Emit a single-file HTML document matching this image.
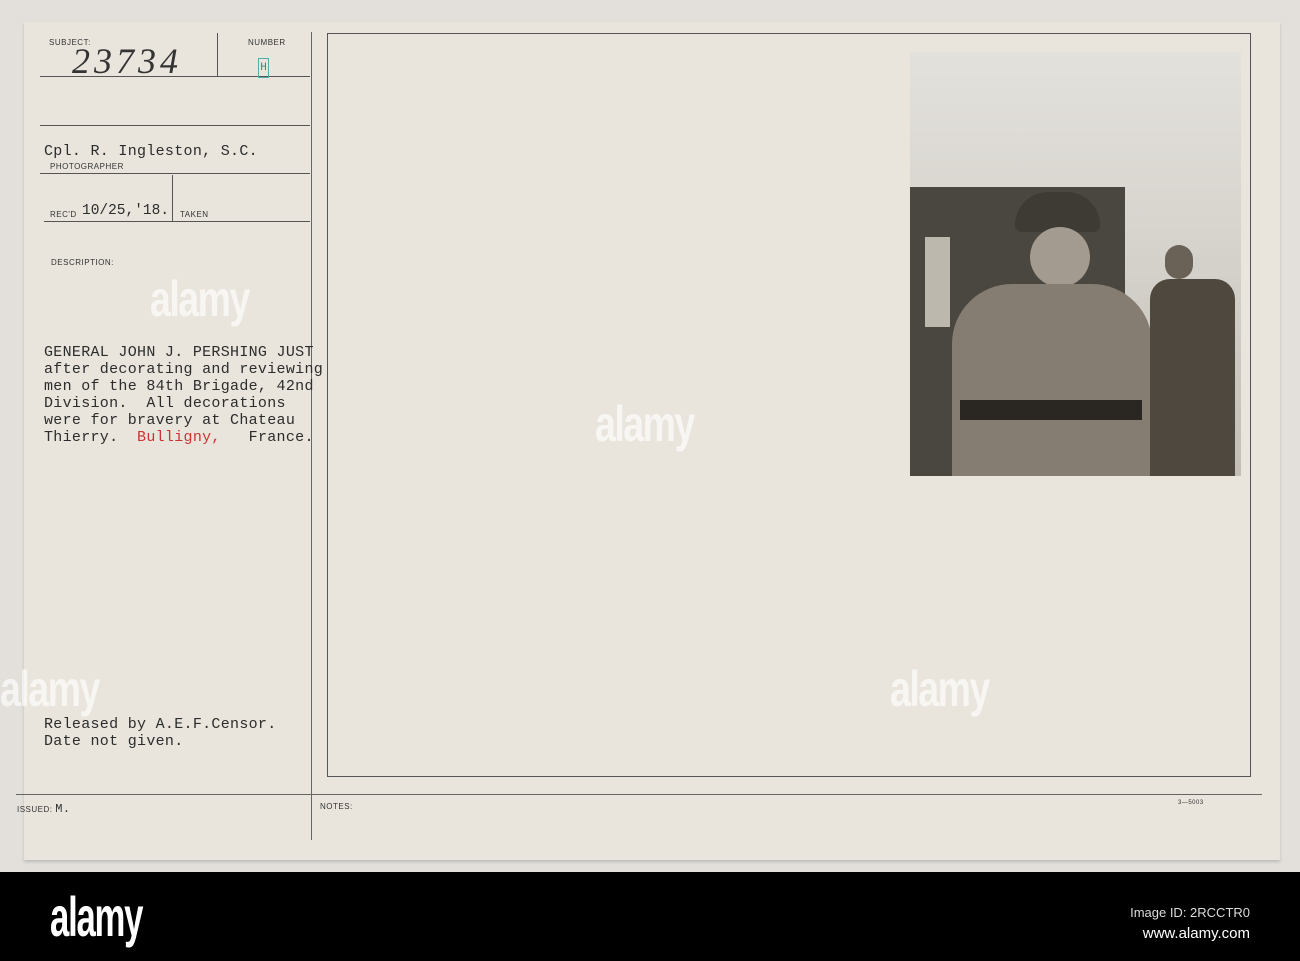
<!DOCTYPE html><html><head><meta charset="utf-8"><style>
body{margin:0;width:1300px;height:961px;background:#e3e0db;position:relative;overflow:hidden;font-family:"Liberation Mono",monospace;}
.card{position:absolute;left:24px;top:22px;width:1256px;height:838px;background:#e9e5dd;box-shadow:0 2px 3px #bbb;}
.l{position:absolute;background:#555;}
.t{position:absolute;font-size:15px;letter-spacing:.3px;color:#2c2c2c;white-space:pre;line-height:17px;}
.s{position:absolute;font-family:"Liberation Sans",sans-serif;font-size:8px;color:#333;letter-spacing:.5px;}
.wm{position:absolute;font-family:"Liberation Sans",sans-serif;font-weight:bold;color:rgba(255,255,255,.65);font-size:50px;transform:scaleX(.75);transform-origin:left;letter-spacing:-2px;}
</style></head><body>
<div class="card"></div>
<div class="l" style="left:40px;top:76px;width:270px;height:1px"></div>
<div class="l" style="left:217px;top:33px;width:1px;height:44px"></div>
<div class="l" style="left:40px;top:125px;width:270px;height:1px"></div>
<div class="l" style="left:40px;top:173px;width:270px;height:1px"></div>
<div class="l" style="left:172px;top:175px;width:1px;height:46px"></div>
<div class="l" style="left:44px;top:221px;width:266px;height:1px"></div>
<div class="l" style="left:311px;top:32px;width:1px;height:808px;background:#666"></div>
<div style="position:absolute;left:327px;top:33px;width:922px;height:742px;border:1px solid #555"></div>
<div class="l" style="left:16px;top:794px;width:1246px;height:1px;background:#666"></div>
<div class="s" style="left:49px;top:38px">SUBJECT:</div>
<div class="s" style="left:248px;top:38px">NUMBER</div>
<div style="position:absolute;left:72px;top:40px;font-family:'Liberation Serif',serif;font-style:italic;font-size:36px;color:#333;letter-spacing:4px">23734</div>
<div style="position:absolute;left:258px;top:58px;width:9px;height:18px;border:1px solid #5aa;color:#388;font-size:11px;line-height:18px;text-align:center">H</div>
<div class="t" style="left:44px;top:143px">Cpl. R. Ingleston, S.C.</div>
<div class="s" style="left:50px;top:162px">PHOTOGRAPHER</div>
<div class="s" style="left:50px;top:210px">REC'D</div>
<div class="t" style="left:82px;top:203px;font-size:14.5px;letter-spacing:0">10/25,'18.</div>
<div class="s" style="left:180px;top:210px">TAKEN</div>
<div class="s" style="left:51px;top:258px">DESCRIPTION:</div>
<div class="t" style="left:44px;top:344px">GENERAL JOHN J. PERSHING JUST
after decorating and reviewing
men of the 84th Brigade, 42nd
Division.  All decorations
were for bravery at Chateau
Thierry.  <span style="color:#c33">Bulligny,</span>   France.</div>
<div class="t" style="left:44px;top:716px">Released by A.E.F.Censor.
Date not given.</div>
<div class="s" style="left:17px;top:802px">ISSUED: <span style="font-size:12px;font-family:'Liberation Mono'">M.</span></div>
<div class="s" style="left:320px;top:802px">NOTES:</div>
<div class="s" style="left:1178px;top:800px;font-size:6px">3—5003</div>
<div style="position:absolute;left:910px;top:52px;width:331px;height:424px;background:linear-gradient(#e3e1dc,#d8d5cf 40%,#c3beb5);overflow:hidden">
<div style="position:absolute;left:0;top:135px;width:215px;height:300px;background:#4a4640"></div>
<div style="position:absolute;left:15px;top:185px;width:25px;height:90px;background:#bdb8ae"></div>
<div style="position:absolute;left:105px;top:140px;width:85px;height:40px;border-radius:40px 40px 8px 8px;background:#3e3a34"></div>
<div style="position:absolute;left:120px;top:175px;width:60px;height:60px;border-radius:30px;background:#a39b90"></div>
<div style="position:absolute;left:42px;top:232px;width:200px;height:200px;border-radius:60px 60px 0 0;background:#857d71"></div>
<div style="position:absolute;left:50px;top:348px;width:182px;height:20px;background:#2a2622"></div>
<div style="position:absolute;left:255px;top:193px;width:28px;height:34px;border-radius:14px;background:#6a6257"></div>
<div style="position:absolute;left:240px;top:227px;width:85px;height:200px;border-radius:20px 20px 0 0;background:#4e483f"></div>
</div>
<div class="wm" style="left:150px;top:270px">alamy</div>
<div class="wm" style="left:595px;top:395px">alamy</div>
<div class="wm" style="left:0;top:660px">alamy</div>
<div class="wm" style="left:890px;top:660px">alamy</div>
<div style="position:absolute;left:0;top:872px;width:1300px;height:89px;background:#000"></div>
<div style="position:absolute;left:50px;top:884px;font-family:'Liberation Sans',sans-serif;font-weight:bold;font-size:56px;color:#fff;transform:scaleX(.62);transform-origin:left;letter-spacing:-2px">alamy</div>
<div style="position:absolute;right:50px;top:905px;font-family:'Liberation Sans',sans-serif;font-size:13px;color:#ddd">Image ID: 2RCCTR0</div>
<div style="position:absolute;right:50px;top:925px;font-family:'Liberation Sans',sans-serif;font-size:15px;color:#fff">www.alamy.com</div>
</body></html>
